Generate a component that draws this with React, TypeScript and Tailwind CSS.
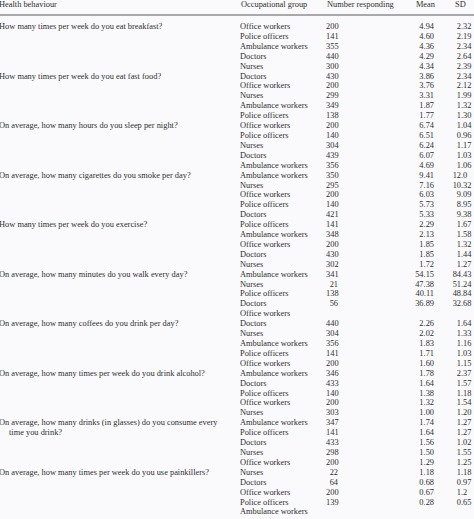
import React from "react";

type Row = [string, string, string, string];

const groups: { q: string; rows: Row[] }[] = [
  {
    q: "How many times per week do you eat breakfast?",
    rows: [
      ["Office workers", "200", "4.94", "2.32"],
      ["Police officers", "141", "4.60", "2.19"],
      ["Ambulance workers", "355", "4.36", "2.34"],
      ["Doctors", "440", "4.29", "2.64"],
      ["Nurses", "300", "4.34", "2.39"],
    ],
  },
  {
    q: "How many times per week do you eat fast food?",
    rows: [
      ["Doctors", "430", "3.86", "2.34"],
      ["Office workers", "200", "3.76", "2.12"],
      ["Nurses", "299", "3.31", "1.99"],
      ["Ambulance workers", "349", "1.87", "1.32"],
      ["Police officers", "138", "1.77", "1.30"],
    ],
  },
  {
    q: "On average, how many hours do you sleep per night?",
    rows: [
      ["Office workers", "200", "6.74", "1.04"],
      ["Police officers", "140", "6.51", "0.96"],
      ["Nurses", "304", "6.24", "1.17"],
      ["Doctors", "439", "6.07", "1.03"],
      ["Ambulance workers", "356", "4.69", "1.06"],
    ],
  },
  {
    q: "On average, how many cigarettes do you smoke per day?",
    rows: [
      ["Ambulance workers", "350", "9.41", "12.0"],
      ["Nurses", "295", "7.16", "10.32"],
      ["Office workers", "200", "6.03", "9.09"],
      ["Police officers", "140", "5.73", "8.95"],
      ["Doctors", "421", "5.33", "9.38"],
    ],
  },
  {
    q: "How many times per week do you exercise?",
    rows: [
      ["Police officers", "141", "2.29", "1.67"],
      ["Ambulance workers", "348", "2.13", "1.58"],
      ["Office workers", "200", "1.85", "1.32"],
      ["Doctors", "430", "1.85", "1.44"],
      ["Nurses", "302", "1.72", "1.27"],
    ],
  },
  {
    q: "On average, how many minutes do you walk every day?",
    rows: [
      ["Ambulance workers", "341", "54.15", "84.43"],
      ["Nurses", "21", "47.38", "51.24"],
      ["Police officers", "138", "40.11", "48.84"],
      ["Doctors", "56", "36.89", "32.68"],
      ["Office workers", "", "", ""],
    ],
  },
  {
    q: "On average, how many coffees do you drink per day?",
    rows: [
      ["Doctors", "440", "2.26", "1.64"],
      ["Nurses", "304", "2.02", "1.33"],
      ["Ambulance workers", "356", "1.83", "1.16"],
      ["Police officers", "141", "1.71", "1.03"],
      ["Office workers", "200", "1.60", "1.15"],
    ],
  },
  {
    q: "On average, how many times per week do you drink alcohol?",
    rows: [
      ["Ambulance workers", "346", "1.78", "2.37"],
      ["Doctors", "433", "1.64", "1.57"],
      ["Police officers", "140", "1.38", "1.18"],
      ["Office workers", "200", "1.32", "1.54"],
      ["Nurses", "303", "1.00", "1.20"],
    ],
  },
  {
    q: "On average, how many drinks (in glasses) do you consume every time you drink?",
    rows: [
      ["Ambulance workers", "347", "1.74", "1.27"],
      ["Police officers", "141", "1.64", "1.27"],
      ["Doctors", "433", "1.56", "1.02"],
      ["Nurses", "298", "1.50", "1.55"],
      ["Office workers", "200", "1.29", "1.25"],
    ],
  },
  {
    q: "On average, how many times per week do you use painkillers?",
    rows: [
      ["Nurses", "22", "1.18", "1.18"],
      ["Doctors", "64", "0.68", "0.97"],
      ["Office workers", "200", "0.67", "1.2"],
      ["Police officers", "139", "0.28", "0.65"],
      ["Ambulance workers", "", "", ""],
    ],
  },
];

function Sd({ value }: { value: string }) {
  if (!value) return null;
  const [whole, frac] = value.split(".");
  return (
    <div className="flex">
      <span className="w-[27px] text-right">{whole}</span>
      <span>.{frac}</span>
    </div>
  );
}

export default function App() {
  return (
    <div
      className="w-[474px] h-[519px] overflow-hidden bg-[#fafafc] text-[#2e2e2e] text-[8.4px] leading-[9.92px]"
      style={{ fontFamily: '"Liberation Serif", serif' }}
    >
      {/* Header */}
      <div className="flex h-[16px] border-b-2 border-[#a9a9ab] whitespace-nowrap">
        <div className="w-[242px] -ml-px">Health behaviour</div>
        <div className="w-[86px]">Occupational group</div>
        <div className="w-[70px]">Number responding</div>
        <div className="w-[38px] text-right">Mean</div>
        <div className="pl-[20px]">SD</div>
      </div>

      {/* Body */}
      <div className="pt-[6px]">
        {groups.map((g) => (
          <div key={g.q} className="flex">
            <div className="w-[242px] -ml-px pr-[12px] pl-[10px] -indent-[10px]">{g.q}</div>
            <div className="flex flex-col">
              {g.rows.map((r, i) => (
                <div key={i} className="flex h-[9.92px] whitespace-nowrap">
                  <div className="w-[86px]">{r[0]}</div>
                  <div className="w-[70px]">
                    <span className="inline-block w-[12px] text-right">{r[1]}</span>
                  </div>
                  <div className="w-[38px] text-right">{r[2]}</div>
                  <div className="w-[40px]">
                    <Sd value={r[3]} />
                  </div>
                </div>
              ))}
            </div>
          </div>
        ))}
      </div>
    </div>
  );
}
